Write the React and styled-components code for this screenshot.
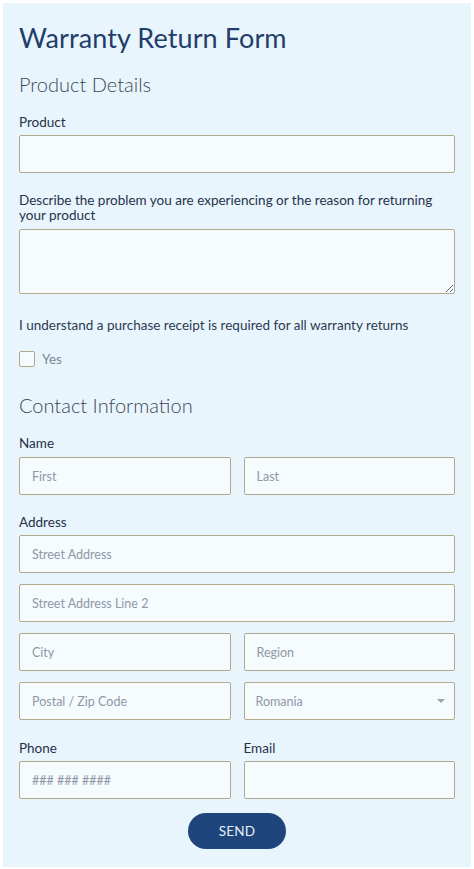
import React from "react";
import styled, { createGlobalStyle } from "styled-components";

const Global = createGlobalStyle`
  html, body { margin: 0; padding: 0; background: #ffffff; }
  body { font-family: "Lato", "Noto Sans", sans-serif; }
  * { box-sizing: border-box; }
`;

const Panel = styled.div`
  margin: 3px;
  width: 468px;
  background: #e9f5fc;
  padding: 18px 16px 18px;
  display: flex;
  flex-direction: column;
`;

const Title = styled.h1`
  margin: 0;
  font-size: 27px;
  line-height: 34px;
  font-weight: 400;
  color: #233d6b;
  letter-spacing: 0.1px;
`;

const SectionTitle = styled.h2`
  margin: ${(p) => p.$top}px 0 0;
  font-size: 20px;
  line-height: 24px;
  font-weight: 300;
  color: #3d4859;
`;

const Field = styled.div`
  margin-top: ${(p) => p.$top}px;
  display: flex;
  flex-direction: column;
  gap: ${(p) => (p.$gap != null ? p.$gap : 4)}px;
`;

const Label = styled.label`
  font-size: 13.5px;
  line-height: ${(p) => p.$lh || 18}px;
  color: #26324a;
`;

const Question = styled.div`
  margin-top: ${(p) => p.$top}px;
  font-size: 13.5px;
  line-height: 18px;
  color: #2c3a52;
`;

const Input = styled.input`
  width: 100%;
  height: 38px;
  border: 1px solid #b3a98c;
  border-radius: 2px;
  background: #f6fbfe;
  padding: 0 12px;
  font-family: inherit;
  font-size: 12.5px;
  color: #333;
  outline: none;
  &::placeholder { color: #8e98a6; }
`;

const TextArea = styled.textarea`
  width: 100%;
  height: 65px;
  border: 1px solid #b3a98c;
  border-radius: 2px;
  background: #f6fbfe;
  padding: 8px 12px;
  font-family: inherit;
  display: block;
  resize: vertical;
  outline: none;
`;

const Rows = styled.div`
  display: flex;
  flex-direction: column;
  gap: ${(p) => p.$gap || 11}px;
`;

const Pair = styled.div`
  display: grid;
  grid-template-columns: 1fr 1fr;
  column-gap: 13px;
  margin-top: ${(p) => p.$top || 0}px;
`;

const SelectWrap = styled.div`
  position: relative;
`;

const Select = styled.select`
  width: 100%;
  height: 38px;
  border: 1px solid #b3a98c;
  border-radius: 2px;
  background: #f6fbfe;
  padding: 0 11px;
  font-family: inherit;
  font-size: 12.5px;
  color: #8e98a6;
  appearance: none;
  -webkit-appearance: none;
  outline: none;
`;

const Caret = styled.svg`
  position: absolute;
  right: 10px;
  top: 17px;
  pointer-events: none;
`;

const CheckRow = styled.label`
  margin-top: 17px;
  display: flex;
  align-items: center;
  gap: 7px;
  font-size: 13.5px;
  color: #7b8594;
`;

const Box = styled.span`
  width: 16px;
  height: 16px;
  border: 1px solid #b3a98c;
  border-radius: 2px;
  background: #f6fbfe;
`;

const ButtonRow = styled.div`
  margin-top: 14px;
  display: flex;
  justify-content: center;
`;

const Send = styled.button`
  width: 98px;
  height: 36px;
  border: none;
  border-radius: 18px;
  background: #1f457d;
  color: #e8eef8;
  font-family: inherit;
  font-size: 13.5px;
  letter-spacing: 0.2px;
`;

export default function App() {
  return (
    <>
      <Global />
      <Panel>
        <Title>Warranty Return Form</Title>
        <SectionTitle $top={17}>Product Details</SectionTitle>
        <Field $top={17}>
          <Label>Product</Label>
          <Input />
        </Field>
        <Field $top={20} $gap={6}>
          <Label $lh={15}>
            Describe the problem you are experiencing or the reason for returning your product
          </Label>
          <TextArea />
        </Field>
        <Question $top={22}>
          I understand a purchase receipt is required for all warranty returns
        </Question>
        <CheckRow>
          <Box />
          Yes
        </CheckRow>
        <SectionTitle $top={26}>Contact Information</SectionTitle>
        <Field $top={17} $gap={5}>
          <Label>Name</Label>
          <Pair>
            <Input placeholder="First" />
            <Input placeholder="Last" />
          </Pair>
        </Field>
        <Field $top={18}>
          <Label>Address</Label>
          <Rows>
            <Input placeholder="Street Address" />
            <Input placeholder="Street Address Line 2" />
            <Pair>
              <Input placeholder="City" />
              <Input placeholder="Region" />
            </Pair>
            <Pair>
              <Input placeholder="Postal / Zip Code" />
              <SelectWrap>
                <Select defaultValue="Romania">
                  <option>Romania</option>
                </Select>
                <Caret width="8" height="4" viewBox="0 0 8 4">
                  <path d="M0 0h8L4 4z" fill="#9aa2ae" />
                </Caret>
              </SelectWrap>
            </Pair>
          </Rows>
        </Field>
        <Pair $top={19}>
          <Field $top={0}>
            <Label>Phone</Label>
            <Input placeholder="### ### ####" />
          </Field>
          <Field $top={0}>
            <Label>Email</Label>
            <Input />
          </Field>
        </Pair>
        <ButtonRow>
          <Send>SEND</Send>
        </ButtonRow>
      </Panel>
    </>
  );
}
